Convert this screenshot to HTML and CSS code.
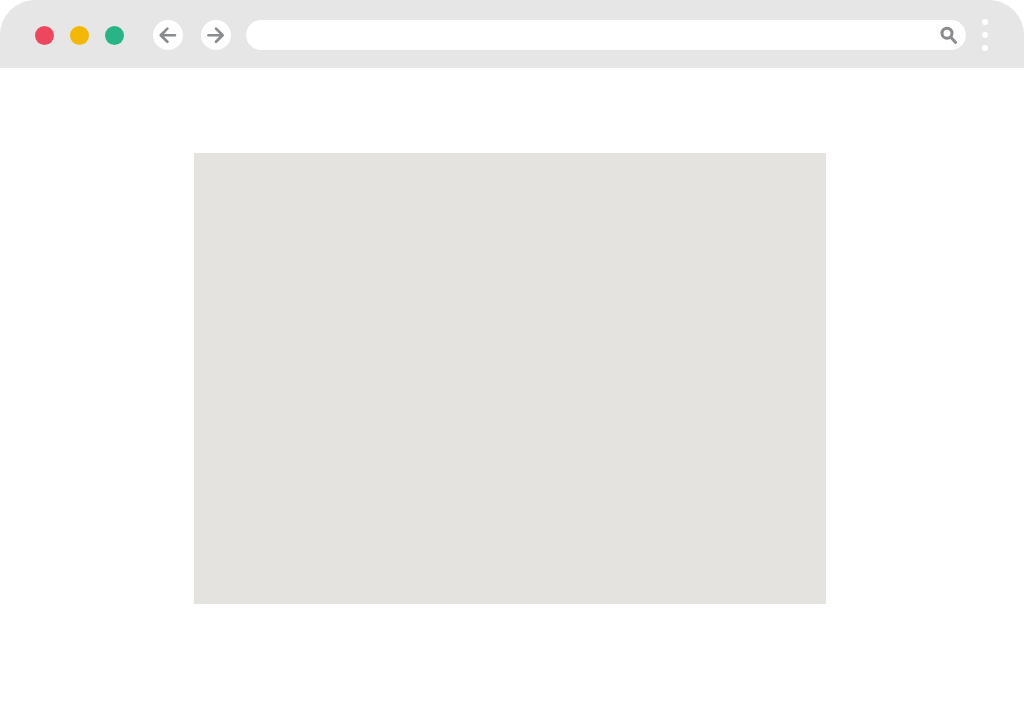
FILE: index.html
```html
<!DOCTYPE html>
<html lang="en">
<head>
<meta charset="utf-8">
<meta name="viewport" content="width=device-width, initial-scale=1">
<title>Browser window</title>
<link rel="stylesheet" href="styles.css">
</head>
<body>
<div class="window">
  <header class="toolbar">
    <div class="window-controls">
      <button class="control control-close" type="button" aria-label="Close"></button>
      <button class="control control-minimize" type="button" aria-label="Minimize"></button>
      <button class="control control-maximize" type="button" aria-label="Maximize"></button>
    </div>
    <nav class="history" aria-label="History">
      <button class="nav-button" type="button" aria-label="Back">
        <svg class="icon" viewBox="0 0 30 30" aria-hidden="true"><path d="M22 15.2H8M14.4 8.6L7.7 15.2L14.4 21.8"/></svg>
      </button>
      <button class="nav-button" type="button" aria-label="Forward">
        <svg class="icon" viewBox="0 0 30 30" aria-hidden="true"><path d="M7.4 15.2H21.4M15 8.6L21.7 15.2L15 21.8"/></svg>
      </button>
    </nav>
    <form class="address" role="search">
      <input class="address-input" type="text" aria-label="Address">
      <button class="search-button" type="submit" aria-label="Search">
        <svg class="icon icon-search" viewBox="0 0 30 30" aria-hidden="true"><circle cx="11" cy="13.2" r="5"/><path d="M14.6 17L19.6 22.4"/></svg>
      </button>
    </form>
    <button class="menu" type="button" aria-label="Menu">
      <span class="menu-dot"></span>
      <span class="menu-dot"></span>
      <span class="menu-dot"></span>
    </button>
  </header>
  <main class="page">
    <div class="placeholder"></div>
  </main>
</div>
</body>
</html>
```

FILE: styles.css
```css
* {
  box-sizing: border-box;
}

body {
  margin: 0;
  background: #fff;
  font-family: "Liberation Sans", Arial, sans-serif;
}

button {
  padding: 0;
  border: 0;
  background: none;
}

.window {
  display: flex;
  flex-direction: column;
  min-height: 100vh;
}

.toolbar {
  display: flex;
  align-items: center;
  padding: 19px 36px 17px 35px;
  border-radius: 35px 35px 0 0;
  background: #e6e6e6;
}

.window-controls {
  display: flex;
  gap: 16px;
  margin-right: 29px;
}

.control {
  width: 19px;
  height: 19px;
  border-radius: 50%;
}

.control-close {
  background: #ef465f;
}

.control-minimize {
  background: #f5b800;
}

.control-maximize {
  background: #29b488;
}

.history {
  display: flex;
  gap: 18px;
  margin-right: 15px;
}

.nav-button {
  width: 30px;
  height: 30px;
  border-radius: 50%;
  background: #fff;
}

.icon {
  display: block;
  width: 30px;
  height: 30px;
  fill: none;
  stroke: #8a8b8e;
  stroke-width: 2.6;
  stroke-linecap: round;
  stroke-linejoin: round;
}

.icon-search {
  stroke-width: 3;
}

.address {
  display: flex;
  flex: 1;
  min-width: 0;
  height: 30px;
  margin-right: 16px;
  border-radius: 15px;
  background: #fff;
}

.address-input {
  flex: 1;
  min-width: 0;
  padding: 0 0 0 16px;
  border: 0;
  outline: 0;
  background: transparent;
  font: inherit;
}

.search-button {
  width: 30px;
  height: 30px;
}

.menu {
  display: flex;
  flex-direction: column;
  gap: 7px;
}

.menu-dot {
  width: 6px;
  height: 6px;
  border-radius: 50%;
  background: #fff;
}

.page {
  display: flex;
  flex: 1;
  padding: 85px 198px 100px 194px;
}

.placeholder {
  flex: 1;
  background: #e4e3df;
}
```
